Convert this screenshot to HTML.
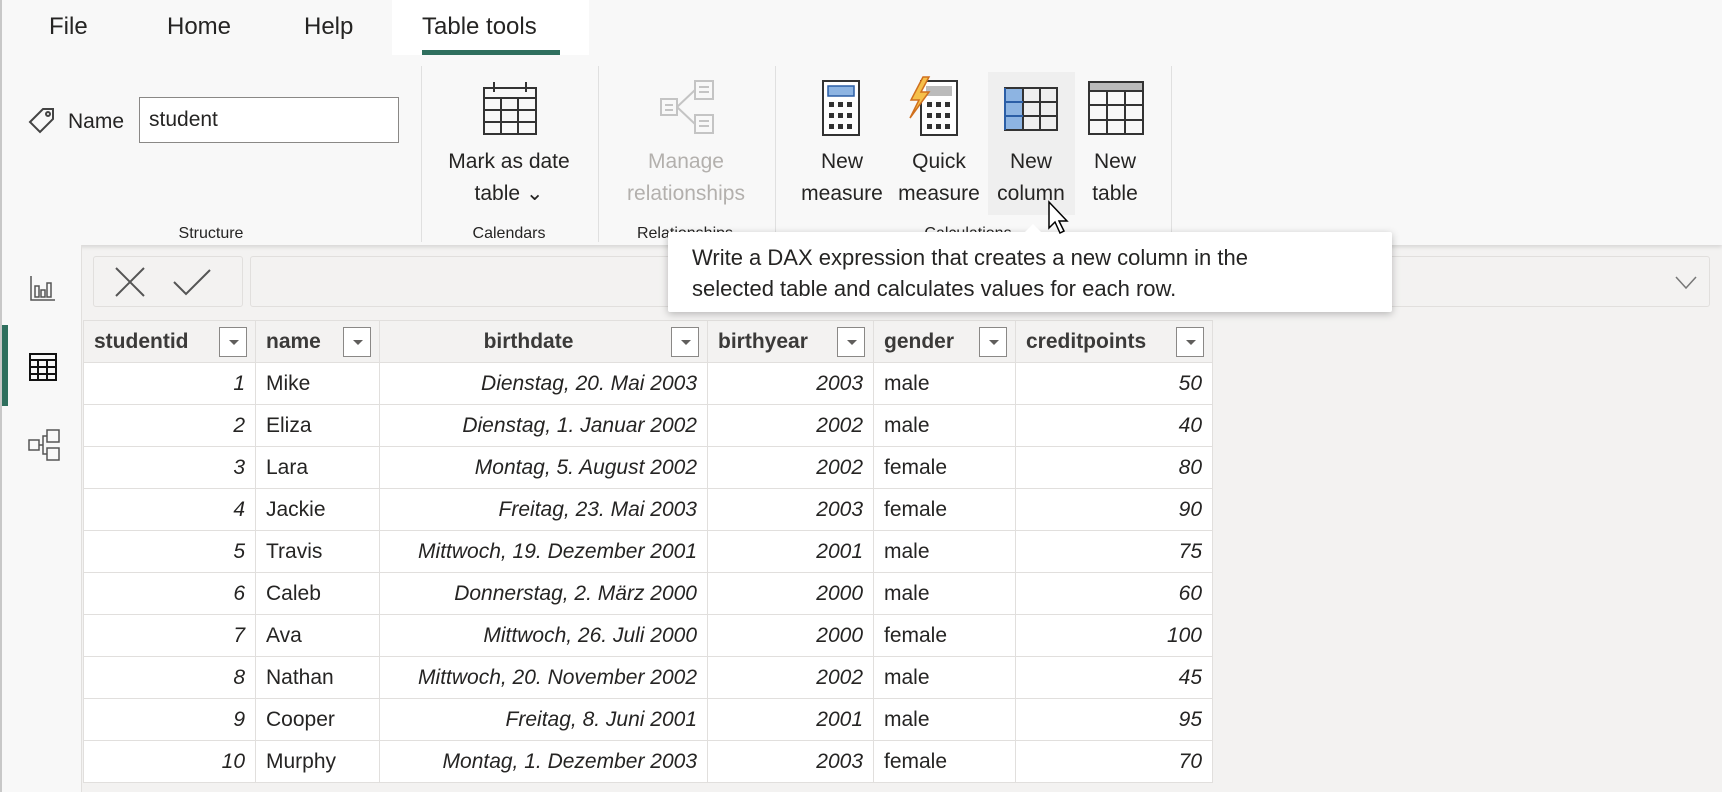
<!DOCTYPE html>
<html><head><meta charset="utf-8"><style>
*{box-sizing:border-box;margin:0;padding:0}
body{width:1722px;height:792px;overflow:hidden;background:#f3f2f1;font-family:"Liberation Sans",Arial,sans-serif;color:#252423;position:relative}
.abs{position:absolute}
.top{left:0;top:0;width:1722px;height:245px;background:#f8f8f8;border-left:2px solid #c8c8c8;box-shadow:0 2px 4px rgba(0,0,0,.12)}
.tab{position:absolute;top:13px;font-size:24px;color:#252423}
.sep{position:absolute;top:66px;width:1px;height:176px;background:#e0e0e0}
.lbl{position:absolute;font-size:21px;text-align:center;line-height:32px;color:#252423;white-space:nowrap;transform:translateX(-50%)}
.grp{position:absolute;top:225px;font-size:16px;transform:translateX(-50%);color:#252423;white-space:nowrap}
table{position:absolute;left:83px;top:320px;border-collapse:collapse;background:#fff;font-size:21px}
td,th{border:1px solid #e1dfdd;height:42px;padding:0 10px;white-space:nowrap}
th{background:#f3f2f1;font-weight:bold;text-align:left;position:relative;color:#3b3a39}
td.r{text-align:right;font-style:italic}
td.n{text-align:right;font-style:italic}
.dd{position:absolute;right:8px;top:6px;width:28px;height:30px;border:1px solid #8a8886;background:#fff}
.dd:after{content:"";position:absolute;left:9px;top:12px;border-left:5px solid transparent;border-right:5px solid transparent;border-top:5px solid #605e5c}
</style></head><body>
<div class="abs top">
  <div class="abs" style="left:390px;top:0;width:197px;height:55px;background:#fff"></div>
  <div class="tab" style="left:47px">File</div>
  <div class="tab" style="left:165px">Home</div>
  <div class="tab" style="left:302px">Help</div>
  <div class="tab" style="left:420px">Table tools</div>
  <div class="abs" style="left:420px;top:50px;width:138px;height:5px;background:#2f6f5e"></div>

  <svg class="abs" style="left:24px;top:104px" width="32" height="32" viewBox="0 0 32 32" fill="none" stroke="#444" stroke-width="2"><path d="M4 18 L17 5 L27 5 L27 15 L14 28 Z"/><circle cx="22" cy="10" r="2"/></svg>
  <div class="abs" style="left:66px;top:110px;font-size:21px">Name</div>
  <div class="abs" style="left:137px;top:97px;width:260px;height:46px;background:#fff;border:1.5px solid #8a8886;font-size:21px;padding:10px 9px">student</div>
  <div class="grp" style="left:209px">Structure</div>

  <div class="sep" style="left:419px"></div>
  <svg class="abs" style="left:480px;top:80px" width="56" height="56" viewBox="0 0 56 56" fill="none" stroke="#333" stroke-width="2"><rect x="2" y="8" width="52" height="46"/><path d="M2 18H54M2 30H54M2 42H54M19 18V54M36 18V54M12 2V12M44 2V12"/></svg>
  <div class="lbl" style="left:507px;top:146px">Mark as date</div>
  <div class="lbl" style="left:507px;top:178px">table ⌄</div>
  <div class="grp" style="left:507px">Calendars</div>

  <div class="sep" style="left:596px"></div>
  <svg class="abs" style="left:657px;top:79px" width="60" height="56" viewBox="0 0 60 56" fill="none" stroke="#c4c4c4" stroke-width="2"><rect x="2" y="20" width="16" height="16"/><rect x="36" y="2" width="18" height="18"/><rect x="36" y="36" width="18" height="18"/><path d="M18 28L36 11M18 28L36 45M6 26h8M6 31h8M40 8h10M40 13h10M40 42h10M40 47h10"/></svg>
  <div class="lbl" style="left:684px;top:146px;color:#b3b0ad">Manage</div>
  <div class="lbl" style="left:684px;top:178px;color:#b3b0ad">relationships</div>
  <div class="grp" style="left:683px">Relationships</div>

  <div class="sep" style="left:773px"></div>
  <svg class="abs" style="left:820px;top:80px" width="38" height="56" viewBox="0 0 38 56"><rect x="1" y="1" width="36" height="54" fill="#fff" stroke="#333" stroke-width="2"/><rect x="6" y="6" width="26" height="10" fill="#8db4e2" stroke="#2b5ea6" stroke-width="1.5"/><g fill="#333"><rect x="7" y="22" width="5" height="5"/><rect x="16" y="22" width="5" height="5"/><rect x="25" y="22" width="5" height="5"/><rect x="7" y="33" width="5" height="5"/><rect x="16" y="33" width="5" height="5"/><rect x="25" y="33" width="5" height="5"/><rect x="7" y="44" width="5" height="5"/><rect x="16" y="44" width="5" height="5"/><rect x="25" y="44" width="5" height="5"/></g></svg>
  <div class="lbl" style="left:840px;top:146px">New</div>
  <div class="lbl" style="left:840px;top:178px">measure</div>

  <svg class="abs" style="left:905px;top:76px" width="52" height="60" viewBox="0 0 52 60"><rect x="14" y="5" width="36" height="54" fill="#fff" stroke="#333" stroke-width="2"/><rect x="19" y="10" width="26" height="10" fill="#bbb"/><g fill="#333"><rect x="20" y="26" width="5" height="5"/><rect x="29" y="26" width="5" height="5"/><rect x="38" y="26" width="5" height="5"/><rect x="20" y="37" width="5" height="5"/><rect x="29" y="37" width="5" height="5"/><rect x="38" y="37" width="5" height="5"/><rect x="20" y="48" width="5" height="5"/><rect x="29" y="48" width="5" height="5"/><rect x="38" y="48" width="5" height="5"/></g><path d="M16 1 L4 24 L12 24 L3 42 L22 16 L14 16 L22 1Z" fill="#f6c04a" stroke="#d0701e" stroke-width="1.5"/></svg>
  <div class="lbl" style="left:937px;top:146px">Quick</div>
  <div class="lbl" style="left:937px;top:178px">measure</div>

  <div class="abs" style="left:986px;top:72px;width:87px;height:143px;background:#efefef"></div>
  <svg class="abs" style="left:1001px;top:86px" width="56" height="46" viewBox="0 0 56 46"><rect x="2" y="2" width="18" height="42" fill="#8db4e2"/><path d="M2 2H54V44H2Z M2 16H54M2 30H54M20 2V44M37 2V44" fill="none" stroke="#333" stroke-width="2"/><path d="M2 16H20M2 30H20M2 2V44" stroke="#2b5ea6" stroke-width="2"/></svg>
  <div class="lbl" style="left:1029px;top:146px">New</div>
  <div class="lbl" style="left:1029px;top:178px">column</div>

  <svg class="abs" style="left:1085px;top:80px" width="58" height="56" viewBox="0 0 58 56"><rect x="2" y="2" width="54" height="9" fill="#bbb"/><path d="M2 2H56V54H2Z M2 11H56M2 25H56M2 40H56M20 11V54M38 11V54" fill="none" stroke="#333" stroke-width="2"/></svg>
  <div class="lbl" style="left:1113px;top:146px">New</div>
  <div class="lbl" style="left:1113px;top:178px">table</div>
  <div class="grp" style="left:966px">Calculations</div>
  <div class="sep" style="left:1169px"></div>
</div>

<!-- left nav -->
<div class="abs" style="left:0;top:245px;width:82px;height:547px;background:#f8f8f8;border-left:2px solid #c8c8c8;border-right:1px solid #e1dfdd"></div>
<svg class="abs" style="left:29px;top:274px" width="28" height="28" viewBox="0 0 28 28" fill="none" stroke="#555" stroke-width="1.5"><path d="M2 2V26H26"/><rect x="6" y="12" width="4" height="11"/><rect x="12" y="16" width="4" height="7"/><rect x="18" y="9" width="4" height="14"/></svg>
<div class="abs" style="left:2px;top:325px;width:6px;height:81px;background:#2f6f5e"></div>
<svg class="abs" style="left:28px;top:352px" width="30" height="30" viewBox="0 0 30 30" fill="none" stroke="#111" stroke-width="2"><rect x="2" y="2" width="26" height="26"/><path d="M2 8H28M2 15H28M2 22H28M10 8V28M19 8V28"/></svg>
<svg class="abs" style="left:27px;top:428px" width="34" height="34" viewBox="0 0 34 34" fill="none" stroke="#555" stroke-width="1.5"><rect x="2" y="12" width="10" height="10"/><rect x="20" y="2" width="12" height="12"/><rect x="20" y="20" width="12" height="12"/><path d="M12 17H16V8H20M16 17V26H20"/></svg>

<!-- formula bar -->
<div class="abs" style="left:93px;top:256px;width:150px;height:51px;border:1px solid #e1dfdd;border-radius:3px;background:#f3f2f1"></div>
<svg class="abs" style="left:113px;top:266px" width="34" height="32" viewBox="0 0 34 32" stroke="#555" stroke-width="2"><path d="M3 2L31 30M31 2L3 30"/></svg>
<svg class="abs" style="left:172px;top:268px" width="40" height="28" viewBox="0 0 40 28" fill="none" stroke="#555" stroke-width="2"><path d="M2 14L14 26L38 2"/></svg>
<div class="abs" style="left:250px;top:256px;width:1460px;height:51px;border:1px solid #e1dfdd;border-radius:3px;background:#f3f2f1"></div>
<svg class="abs" style="left:1675px;top:276px" width="22" height="14" viewBox="0 0 22 14" fill="none" stroke="#777" stroke-width="1.5"><path d="M1 1L11 12L21 1"/></svg>

<table>
<tr><th style="width:172px">studentid<span class="dd"></span></th><th style="width:124px">name<span class="dd"></span></th><th style="width:328px;text-align:center;padding-right:40px">birthdate<span class="dd"></span></th><th style="width:166px">birthyear<span class="dd"></span></th><th style="width:142px">gender<span class="dd"></span></th><th style="width:197px">creditpoints<span class="dd"></span></th></tr>
<tr><td class="n">1</td><td>Mike</td><td class="r">Dienstag, 20. Mai 2003</td><td class="n">2003</td><td>male</td><td class="n">50</td></tr>
<tr><td class="n">2</td><td>Eliza</td><td class="r">Dienstag, 1. Januar 2002</td><td class="n">2002</td><td>male</td><td class="n">40</td></tr>
<tr><td class="n">3</td><td>Lara</td><td class="r">Montag, 5. August 2002</td><td class="n">2002</td><td>female</td><td class="n">80</td></tr>
<tr><td class="n">4</td><td>Jackie</td><td class="r">Freitag, 23. Mai 2003</td><td class="n">2003</td><td>female</td><td class="n">90</td></tr>
<tr><td class="n">5</td><td>Travis</td><td class="r">Mittwoch, 19. Dezember 2001</td><td class="n">2001</td><td>male</td><td class="n">75</td></tr>
<tr><td class="n">6</td><td>Caleb</td><td class="r">Donnerstag, 2. März 2000</td><td class="n">2000</td><td>male</td><td class="n">60</td></tr>
<tr><td class="n">7</td><td>Ava</td><td class="r">Mittwoch, 26. Juli 2000</td><td class="n">2000</td><td>female</td><td class="n">100</td></tr>
<tr><td class="n">8</td><td>Nathan</td><td class="r">Mittwoch, 20. November 2002</td><td class="n">2002</td><td>male</td><td class="n">45</td></tr>
<tr><td class="n">9</td><td>Cooper</td><td class="r">Freitag, 8. Juni 2001</td><td class="n">2001</td><td>male</td><td class="n">95</td></tr>
<tr><td class="n">10</td><td>Murphy</td><td class="r">Montag, 1. Dezember 2003</td><td class="n">2003</td><td>female</td><td class="n">70</td></tr>
</table>

<!-- tooltip -->
<div class="abs" style="left:668px;top:232px;width:724px;height:80px;background:#fff;box-shadow:0 2px 8px rgba(0,0,0,.25);border-radius:2px;padding:10px 24px;font-size:22px;line-height:31px;color:#252423">Write a DAX expression that creates a new column in the<br>selected table and calculates values for each row.</div>
<div class="abs" style="left:1024px;top:224px;width:0;height:0;border-left:9px solid transparent;border-right:9px solid transparent;border-bottom:9px solid #fff"></div>
<svg class="abs" style="left:1047px;top:200px" width="24" height="36" viewBox="0 0 24 36"><path d="M2 2V28L8 22L13 33L17 31L12 21H20Z" fill="#fff" stroke="#000" stroke-width="1.5"/></svg>
</body></html>
